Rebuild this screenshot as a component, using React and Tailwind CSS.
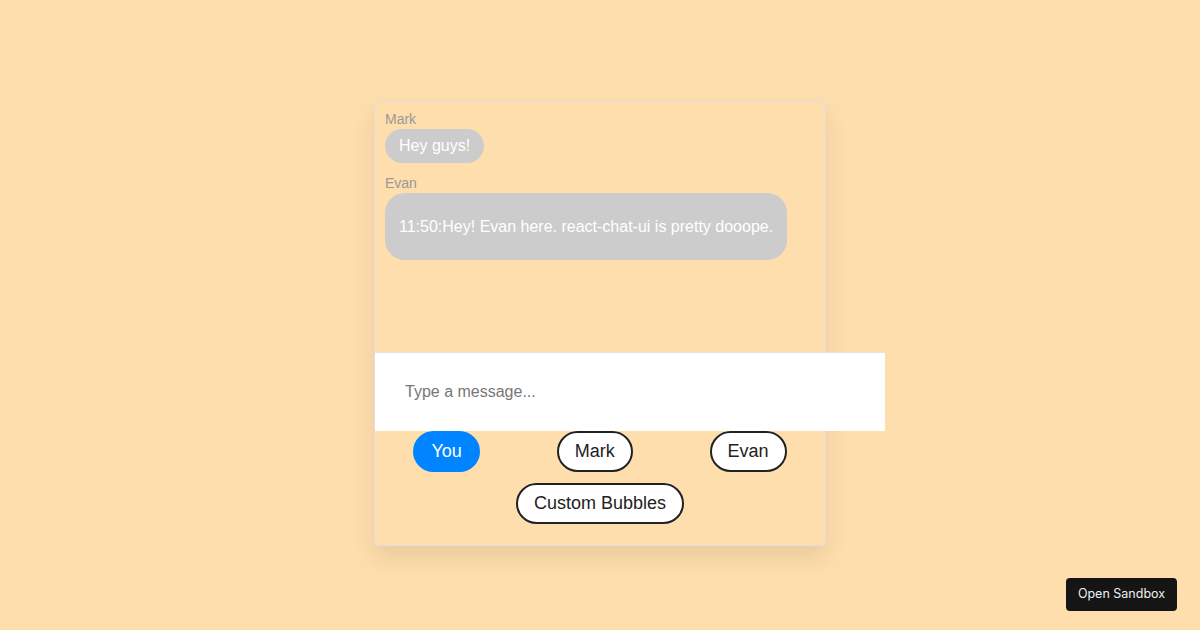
import React, { useState } from 'react';

const messages = [
  { id: 1, sender: 'Mark', text: 'Hey guys!', big: false },
  { id: 2, sender: 'Evan', text: '11:50:Hey! Evan here. react-chat-ui is pretty dooope.', big: true },
];

const users = ['You', 'Mark', 'Evan'];

function App() {
  const [current, setCurrent] = useState('You');
  const [draft, setDraft] = useState('');

  return (
    <div className="relative h-[630px] w-full bg-[#ffdead] font-['Liberation_Sans',Arial,sans-serif]">
      <div className="flex justify-center pt-[101px]">
        <div className="w-[452px] rounded-[4px] border border-[#e2dde2] shadow-[0_12px_24px_rgba(0,0,0,0.09)]">
          {/* message list */}
          <div className="flex h-[250px] flex-col items-start gap-[12px] px-[10px] pt-[9px]">
            {messages.map((m) => (
              <div key={m.id} className="flex flex-col items-start">
                <span className="text-[14px] leading-[16px] text-[#999]">{m.sender}</span>
                <div
                  className={
                    m.big
                      ? 'mt-[2px] rounded-[20px] bg-[#ccc] px-[14px] py-[24px] text-[16px] leading-[19px] text-white'
                      : 'mt-[2px] rounded-[20px] bg-[#ccc] px-[14px] py-[8px] text-[16px] leading-[18px] text-white'
                  }
                >
                  {m.text}
                </div>
              </div>
            ))}
          </div>

          {/* input */}
          <input
            value={draft}
            onChange={(e) => setDraft(e.target.value)}
            placeholder="Type a message..."
            className="block h-[79px] w-[510px] border-t border-[#e3e3e3] bg-white px-[30px] text-[16px] text-[#333] outline-none placeholder:text-[#777]"
          />

          {/* user switch */}
          <div className="flex justify-around">
            {users.map((u) => (
              <button
                key={u}
                onClick={() => setCurrent(u)}
                className={
                  current === u
                    ? 'rounded-full border-2 border-[#0084ff] bg-[#0084ff] px-4 py-2 text-[18px] leading-[21px] text-white'
                    : 'rounded-full border-2 border-[#222] bg-white px-4 py-2 text-[18px] leading-[21px] text-[#222]'
                }
              >
                {u}
              </button>
            ))}
          </div>
          <div className="flex justify-center pt-[11px] pb-[21px]">
            <button className="rounded-full border-2 border-[#222] bg-white px-4 py-2 text-[18px] leading-[21px] text-[#222]">
              Custom Bubbles
            </button>
          </div>
        </div>
      </div>

      <button className="absolute bottom-[19px] right-[23px] h-[33px] w-[111px] rounded-[4px] bg-[#151515] font-['Inter',sans-serif] text-[12.5px] text-[#f0f0f0]">
        Open Sandbox
      </button>
    </div>
  );
}

export default App;
